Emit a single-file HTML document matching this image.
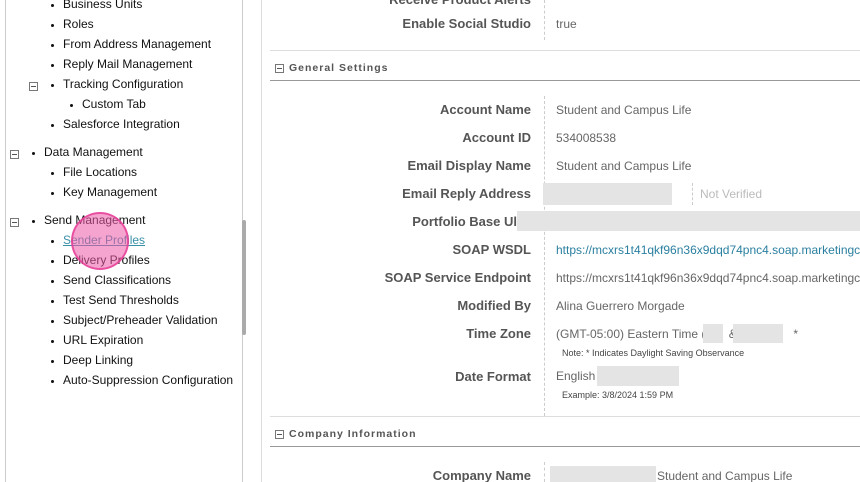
<!DOCTYPE html><html><head><style>
html,body{margin:0;width:860px;height:482px;overflow:hidden;background:#fff;font-family:"Liberation Sans",sans-serif}
#w{position:relative;width:860px;height:482px;overflow:hidden}
.a{position:absolute;white-space:nowrap}
.n{font-size:12px;color:#111}
.b{position:absolute;width:3px;height:3px;background:#111;border-radius:50%}
.m{position:absolute;width:7px;height:7px;border:1px solid #777;font-size:0}
.m:after{content:"";position:absolute;left:1px;top:3px;width:5px;height:1px;background:#555}
.l{font-size:13px;font-weight:bold;color:#555;text-align:right;width:300px;left:231px}
.v{font-size:12px;color:#666;left:556px}
.g{position:absolute;background:#e4e4e4}
.h{font-size:10.5px;font-weight:bold;color:#555;letter-spacing:1px}
</style></head><body><div id="w">
<div style="position:absolute;left:5px;top:0;width:236px;height:482px;border-left:1px solid #ccc;border-right:1px solid #ccc"></div>
<div style="position:absolute;left:242px;top:220px;width:4px;height:115px;background:#aaa;border-radius:2px"></div>
<div style="position:absolute;left:261px;top:0;width:1px;height:482px;background:#ddd"></div>
<div class="b" style="left:51px;top:4px"></div><div class="a n" style="left:63px;top:-3px">Business Units</div>
<div class="b" style="left:51px;top:24px"></div><div class="a n" style="left:63px;top:17px">Roles</div>
<div class="b" style="left:51px;top:44px"></div><div class="a n" style="left:63px;top:37px">From Address Management</div>
<div class="b" style="left:51px;top:64px"></div><div class="a n" style="left:63px;top:57px">Reply Mail Management</div>
<div class="m" style="left:29px;top:82px"></div><div class="b" style="left:51px;top:84px"></div><div class="a n" style="left:63px;top:77px">Tracking Configuration</div>
<div class="b" style="left:70px;top:104px"></div><div class="a n" style="left:82px;top:97px">Custom Tab</div>
<div class="b" style="left:51px;top:124px"></div><div class="a n" style="left:63px;top:117px">Salesforce Integration</div>
<div class="m" style="left:10px;top:150px"></div><div class="b" style="left:32px;top:152px"></div><div class="a n" style="left:44px;top:145px">Data Management</div>
<div class="b" style="left:51px;top:172px"></div><div class="a n" style="left:63px;top:165px">File Locations</div>
<div class="b" style="left:51px;top:192px"></div><div class="a n" style="left:63px;top:185px">Key Management</div>
<div class="m" style="left:10px;top:218px"></div><div class="b" style="left:32px;top:220px"></div><div class="a n" style="left:44px;top:213px">Send Management</div>
<div class="b" style="left:51px;top:240px"></div><div class="a n" style="left:63px;top:233px;color:#3a8fa8;text-decoration:underline">Sender Profiles</div>
<div class="b" style="left:51px;top:260px"></div><div class="a n" style="left:63px;top:253px">Delivery Profiles</div>
<div class="b" style="left:51px;top:280px"></div><div class="a n" style="left:63px;top:273px">Send Classifications</div>
<div class="b" style="left:51px;top:300px"></div><div class="a n" style="left:63px;top:293px">Test Send Thresholds</div>
<div class="b" style="left:51px;top:320px"></div><div class="a n" style="left:63px;top:313px">Subject/Preheader Validation</div>
<div class="b" style="left:51px;top:340px"></div><div class="a n" style="left:63px;top:333px">URL Expiration</div>
<div class="b" style="left:51px;top:360px"></div><div class="a n" style="left:63px;top:353px">Deep Linking</div>
<div class="b" style="left:51px;top:380px"></div><div class="a n" style="left:63px;top:373px">Auto-Suppression Configuration</div>
<div style="position:absolute;left:71px;top:212px;width:54px;height:54px;border-radius:50%;background:rgba(235,90,165,0.55);border:2px solid rgba(230,60,150,0.8)"></div>

<div style="position:absolute;left:544px;top:0;height:40px;border-left:1px dashed #ccc"></div>
<div style="position:absolute;left:544px;top:96px;height:320px;border-left:1px dashed #ccc"></div>
<div style="position:absolute;left:544px;top:462px;height:20px;border-left:1px dashed #ccc"></div>
<div class="a l" style="top:-8px">Receive Product Alerts</div>
<div class="a l" style="top:16px">Enable Social Studio</div><div class="a v" style="top:17px">true</div>
<div style="position:absolute;left:270px;top:50px;width:590px;height:1px;background:#ddd"></div>
<div class="m" style="left:275px;top:64px"></div><div class="a h" style="left:289px;top:62px">General Settings</div>
<div style="position:absolute;left:270px;top:80px;width:590px;height:1px;background:#999"></div>
<div class="a l" style="top:102px">Account Name</div><div class="a v" style="top:103px">Student and Campus Life</div>
<div class="a l" style="top:130px">Account ID</div><div class="a v" style="top:131px">534008538</div>
<div class="a l" style="top:158px">Email Display Name</div><div class="a v" style="top:159px">Student and Campus Life</div>
<div class="a l" style="top:186px">Email Reply Address</div><div class="g" style="left:543px;top:183px;width:129px;height:22px"></div>
<div style="position:absolute;left:692px;top:183px;height:22px;border-left:1px dashed #ccc"></div><div class="a v" style="left:700px;top:187px;color:#bbb">Not Verified</div>
<div class="a l" style="top:214px;width:280px;left:237px">Portfolio Base Ul</div><div class="g" style="left:517px;top:211px;width:343px;height:20px"></div>
<div class="a v" style="top:243px;color:#2a7fa0;width:304px;overflow:hidden">https://mcxrs1t41qkf96n36x9dqd74pnc4.soap.marketingcloudapis.com</div>
<div class="a l" style="top:242px">SOAP WSDL</div>
<div class="a l" style="top:270px">SOAP Service Endpoint</div><div class="a v" style="top:271px;width:304px;overflow:hidden">https://mcxrs1t41qkf96n36x9dqd74pnc4.soap.marketingcloudapis.com</div>
<div class="a l" style="top:298px">Modified By</div><div class="a v" style="top:299px">Alina Guerrero Morgade</div>
<div class="a l" style="top:326px">Time Zone</div><div class="a v" style="top:327px">(GMT-05:00) Eastern Time (&nbsp;&nbsp;&nbsp;&nbsp;&nbsp;&nbsp; &amp;&nbsp;&nbsp;&nbsp;&nbsp;&nbsp;&nbsp;&nbsp;&nbsp;&nbsp;&nbsp;&nbsp;&nbsp;&nbsp;&nbsp;&nbsp;&nbsp; *</div>
<div class="g" style="left:703px;top:324px;width:20px;height:19px"></div><div class="g" style="left:733px;top:324px;width:50px;height:19px"></div>
<div class="a" style="left:562px;top:348px;font-size:9px;color:#444">Note: * Indicates Daylight Saving Observance</div>
<div class="a l" style="top:369px">Date Format</div><div class="a v" style="top:369px">English</div><div class="g" style="left:597px;top:366px;width:82px;height:20px"></div>
<div class="a" style="left:562px;top:390px;font-size:9px;color:#444">Example: 3/8/2024 1:59 PM</div>
<div style="position:absolute;left:270px;top:416px;width:590px;height:1px;background:#ddd"></div>
<div class="m" style="left:275px;top:430px"></div><div class="a h" style="left:289px;top:428px">Company Information</div>
<div style="position:absolute;left:270px;top:446px;width:590px;height:1px;background:#999"></div>
<div class="a l" style="top:468px">Company Name</div><div class="g" style="left:550px;top:466px;width:106px;height:16px"></div><div class="a v" style="left:657px;top:469px">Student and Campus Life</div>
</div></body></html>
